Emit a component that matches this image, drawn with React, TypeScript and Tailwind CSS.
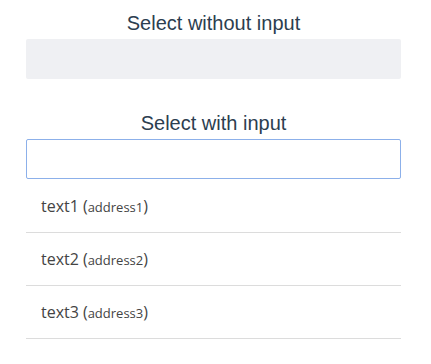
const items = [
  { text: "text1", address: "address1" },
  { text: "text2", address: "address2" },
  { text: "text3", address: "address3" },
];

export default function App() {
  return (
    <div className="w-[431px] h-[364px] bg-white font-['Liberation_Sans',Arial,sans-serif]">
      <div className="ml-[26px] w-[375px] pt-[11px]">
        {/* Select without input */}
        <h2 className="text-center text-[20px] leading-[24px] text-[#2c3e50]">Select without input</h2>
        <div className="mt-[4px] h-[40px] rounded-[2px] bg-[#eff0f3]" />

        {/* Select with input */}
        <h2 className="mt-[32px] text-center text-[20px] leading-[24px] text-[#2c3e50]">Select with input</h2>
        <input
          type="text"
          className="mt-[4px] block h-[40px] w-full rounded-[2px] border-[1.5px] border-[#8cb0ea] bg-white px-3 outline-none"
        />
        <ul className="mt-[1px] font-['Open_Sans',sans-serif] text-[#444]">
          {items.map((item) => (
            <li
              key={item.text}
              className="flex h-[53px] items-center border-b border-[#dcdcdc] px-[15px] pb-[1px]"
            >
              <span className="text-[16px]">{item.text}</span>
              <span className="ml-[4px] text-[16px]">
                (<span className="text-[13px]">{item.address}</span>)
              </span>
            </li>
          ))}
        </ul>
      </div>
    </div>
  );
}
